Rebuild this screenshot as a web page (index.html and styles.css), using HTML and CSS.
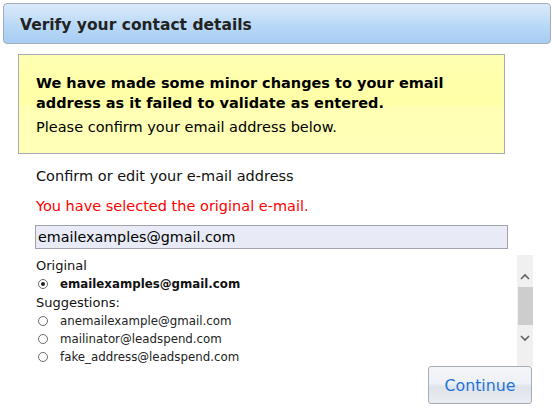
FILE: index.html
```html
<!DOCTYPE html>
<html>
<head>
<meta charset="utf-8">
<link rel="stylesheet" href="styles.css">
</head>
<body>
<div class="page">
  <div class="header"><h1 class="title">Verify your contact details</h1></div>
  <div class="notice">
    <p class="notice-strong">We have made some minor changes to your email address as it failed to validate as entered.</p>
    <p class="notice-text">Please confirm your email address below.</p>
  </div>
  <div class="form">
    <div class="label">Confirm or edit your e-mail address</div>
    <div class="status">You have selected the original e-mail.</div>
    <div class="input">emailexamples@gmail.com</div>
    <div class="listbox">
      <div class="list">
        <div class="group">Original</div>
        <div class="option bold"><span class="radio checked"></span>emailexamples@gmail.com</div>
        <div class="group">Suggestions:</div>
        <div class="option"><span class="radio"></span>anemailexample@gmail.com</div>
        <div class="option"><span class="radio"></span>mailinator@leadspend.com</div>
        <div class="option"><span class="radio"></span>fake_address@leadspend.com</div>
      </div>
      <div class="scrollbar">
        <svg class="arrow" width="16" height="12" viewBox="0 0 16 12"><path d="M4 8 L8 4 L12 8" fill="none" stroke="#606060" stroke-width="1.6"/></svg>
        <div class="thumb"></div>
        <svg class="arrow" width="16" height="12" viewBox="0 0 16 12"><path d="M4 4 L8 8 L12 4" fill="none" stroke="#606060" stroke-width="1.6"/></svg>
      </div>
    </div>
    <div class="actions"><button class="btn">Continue</button></div>
  </div>
</div>
</body>
</html>
```
FILE: styles.css
```css
html, body { margin: 0; padding: 0; background: #fff; }
body { font-family: "DejaVu Sans", Verdana, sans-serif; color: #000; }
.page { padding: 3px 2px 0 3px; width: 548px; }
.header {
  border: 1px solid #a4acba;
  border-radius: 4px;
  background: linear-gradient(#d8e9fa 0%, #cde3f8 25%, #b8d8f6 55%, #a8cdf3 100%);
  display: flex; align-items: center;
  padding: 3px 0 0 16px;
  box-sizing: content-box;
  height: 36px;
}
.title { margin: 0; font-size: 15.5px; font-weight: bold; color: #222; }
.notice {
  margin: 10px 0 0 15px;
  border: 1px solid #a9a9b4;
  background: linear-gradient(#ffffb2 0%, #ffffa6 50%, #ffffb4 54%, #ffffb8 100%);
  padding: 18px 0 0 17px;
  box-sizing: border-box;
  height: 100px;
  width: 487px;
}
.notice p { margin: 0; font-size: 14.5px; line-height: 20px; }
.notice-strong { font-weight: bold; width: 440px; }
.notice-text { margin-top: 4px !important; }
.form { padding-left: 32px; }
.label { margin-top: 12px; font-size: 14.5px; line-height: 20px; color: #111; padding-left: 1px; }
.status { margin-top: 10px; font-size: 14.5px; line-height: 20px; color: #ff0000; padding-left: 1px; }
.input {
  margin-top: 9px;
  height: 22px;
  border: 1px solid #a0a2b0;
  background: #e8ebf5;
  font-size: 14.3px; line-height: 22px;
  padding-left: 2px; box-sizing: content-box;
  width: 469px;
}
.listbox { display: grid; grid-template-columns: 482px 16px; margin-top: 6px; height: 107px; }
.list { padding-left: 1px; padding-top: 2px; }
.group { font-size: 13px; line-height: 18px; color: #111; }
.option { font-size: 11.8px; line-height: 18px; display: flex; align-items: center; color: #222; }
.option.bold { font-weight: bold; color: #111; }
.option.bold + .group { line-height: 19px; }
.radio {
  width: 10px; height: 10px; border: 1px solid #6a6a6a; border-radius: 50%;
  margin: 0 12px 0 2px; box-sizing: border-box; position: relative; flex: none;
  background: #fff;
}
.radio.checked::after {
  content: ""; position: absolute; left: 2px; top: 2px; width: 4px; height: 4px;
  border-radius: 50%; background: #222;
}
.scrollbar { background: #f0f0f0; display: flex; flex-direction: column; align-items: center; padding-top: 16px; }
.arrow { display: block; }
.thumb { width: 15px; height: 38px; background: #cdcdcd; margin: 4px 0 7px; }
.actions { display: flex; justify-content: flex-end; width: 497px; margin-top: 4px; }
.btn {
  width: 104px; height: 38px;
  border: 1px solid #a8acb6; border-radius: 3px;
  background: linear-gradient(#f3f5f9 0%, #eef1f6 45%, #e0e4eb 55%, #e9ecf1 100%);
  color: #1e73d8; font-family: "DejaVu Sans", Verdana, sans-serif; font-size: 15.8px;
  padding: 0;
}
```
